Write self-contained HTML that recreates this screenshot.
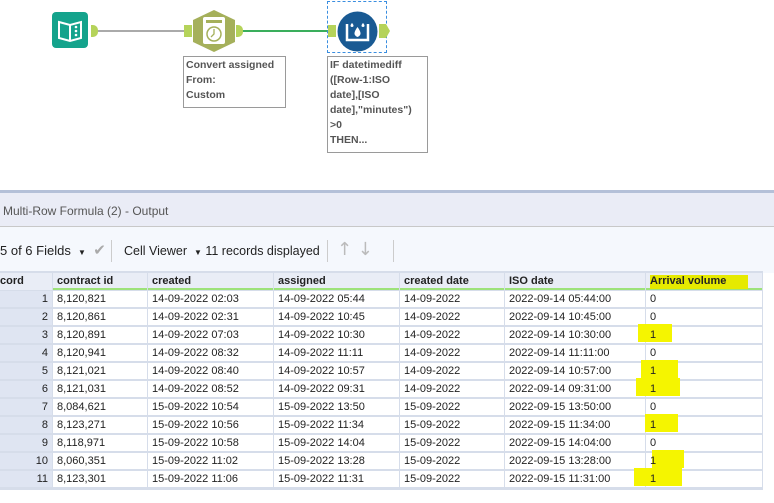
<!DOCTYPE html>
<html><head><meta charset="utf-8"><style>
*{margin:0;padding:0;box-sizing:border-box}
body{width:774px;height:503px;overflow:hidden;background:#fff;font-family:"Liberation Sans",sans-serif;position:relative}
.a{position:absolute}
.tb{position:absolute;border:1px solid #9a9a9a;background:#fff;color:#555;font-size:10.5px;font-weight:bold;line-height:15px;padding:1px 2px}
.cell{position:absolute;height:16px;background:#fff;font-size:11px;line-height:16px;color:#222;padding-left:4px;white-space:nowrap}
.tx{position:absolute;height:16px;font-size:11px;line-height:16px;color:#222;padding-left:4px;z-index:3}
.hd{position:absolute;height:17px;background:#e9edf6;font-size:11px;line-height:16px;color:#222;font-weight:bold;padding-left:4px;border-bottom:2px solid #9de27a}
.rn{position:absolute;height:16px;background:#dfe5f2;font-size:11px;line-height:16px;color:#222;text-align:right;padding-right:4px}
.hl{position:absolute;background:#f5f500;z-index:2}
</style></head><body>
<div class="a" style="left:52px;top:12px;width:36px;height:36px;background:#14a38c;border-radius:4px"></div>
<svg class="a" style="left:52px;top:12px" width="36" height="36"><path d="M7 10 L18 13 L29 10 L29 26 L18 29 L7 26Z" fill="none" stroke="#fff" stroke-width="2"/><line x1="18" y1="13" x2="18" y2="29" stroke="#fff" stroke-width="2"/><circle cx="24" cy="15" r="1.3" fill="#fff"/><circle cx="24" cy="19" r="1.3" fill="#fff"/><circle cx="24" cy="23" r="1.3" fill="#fff"/></svg>
<div class="a" style="left:91px;top:25px;width:7px;height:12px;background:#b5d35a;border-radius:0 5px 5px 0"></div>
<div class="a" style="left:98px;top:30px;width:88px;height:2px;background:#aaa"></div>
<div class="a" style="left:184px;top:25px;width:8px;height:12px;background:#b5d35a"></div>
<svg class="a" style="left:192px;top:10px" width="44" height="42"><polygon points="22,0 43,10 43,32 22,42 1,32 1,10" fill="#a5b05b"/><rect x="11" y="7" width="22" height="27" rx="2" fill="#fff"/><rect x="14" y="10" width="16" height="3" fill="#a5b05b"/><circle cx="22" cy="24" r="7" fill="none" stroke="#a5b05b" stroke-width="1.5"/><path d="M22 19 V24 L19 27" fill="none" stroke="#a5b05b" stroke-width="1.3"/></svg>
<div class="a" style="left:236px;top:25px;width:7px;height:12px;background:#b5d35a;border-radius:0 5px 5px 0"></div>
<div class="a" style="left:243px;top:30px;width:85px;height:2px;background:#3aae5c"></div>
<div class="a" style="left:327px;top:1px;width:60px;height:52px;border:1px dashed #3a8ee0"></div>
<div class="a" style="left:328px;top:25px;width:8px;height:12px;background:#b5d35a"></div>
<svg class="a" style="left:337px;top:11px" width="41" height="41"><circle cx="20.5" cy="20.5" r="20" fill="#195a93"/><path d="M10 13 V29 H31 V13" fill="none" stroke="#fff" stroke-width="2.5"/><path d="M20.5 16 C17 21 16 24 20.5 26 C25 24 24 21 20.5 16Z" fill="#fff"/><path d="M15 12 C13 14 13 16 15 16 C17 16 17 14 15 12Z" fill="#fff"/><path d="M26 12 C24 14 24 16 26 16 C28 16 28 14 26 12Z" fill="#fff"/></svg>
<svg class="a" style="left:379px;top:24px" width="12" height="14"><polygon points="0,0 7,0 11,7 7,14 0,14" fill="#b5d35a"/></svg>
<div class="tb" style="left:183px;top:56px;width:103px;height:52px">Convert assigned<br>From:<br>Custom</div>
<div class="tb" style="left:327px;top:56px;width:101px;height:97px">IF datetimediff<br>([Row-1:ISO<br>date],[ISO<br>date],"minutes")<br>&gt;0<br>THEN...</div>
<div class="a" style="left:0;top:190px;width:774px;height:3px;background:#b4c0d8"></div>
<div class="a" style="left:0;top:193px;width:774px;height:33px;background:#eaecf6;font-size:12px;color:#555;line-height:36px;padding-left:3px">Multi-Row Formula (2) - Output</div>
<div class="a" style="left:0;top:226px;width:774px;height:1px;background:#c8c8c8"></div>
<div class="a" style="left:0;top:227px;width:774px;height:46px;background:#f5f8fd"></div>
<div class="a" style="left:0;top:242px;font-size:13px;color:#222;line-height:18px;white-space:nowrap">5 of 6 Fields &nbsp;<span style="font-size:8px">▼</span>&nbsp; <span style="color:#aaa;font-size:15px">✔</span></div>
<div class="a" style="left:111px;top:240px;width:1px;height:22px;background:#ccc"></div>
<div class="a" style="left:124px;top:242px;font-size:12.5px;color:#222;line-height:18px;white-space:nowrap">Cell Viewer &nbsp;<span style="font-size:8px">▼</span>&nbsp;11 records displayed</div>
<div class="a" style="left:327px;top:240px;width:1px;height:22px;background:#ccc"></div>
<div class="a" style="left:337px;top:239px;font-size:18px;color:#bbb;line-height:22px;font-family:'DejaVu Sans',sans-serif">↑ ↓</div>
<div class="a" style="left:393px;top:240px;width:1px;height:22px;background:#ccc"></div>
<div class="a" style="left:0;top:271px;width:763px;height:219px;background:#d6ddea"></div>
<div id="t"></div>
<script>
var cols=[[0,52],[53,94],[148,125],[274,125],[400,104],[505,140],[646,116]];
var hd=["cord","contract id","created","assigned","created date","ISO date","Arrival volume"];
var rows=[["8,120,821","14-09-2022 02:03","14-09-2022 05:44","14-09-2022","2022-09-14 05:44:00","0"],
["8,120,861","14-09-2022 02:31","14-09-2022 10:45","14-09-2022","2022-09-14 10:45:00","0"],
["8,120,891","14-09-2022 07:03","14-09-2022 10:30","14-09-2022","2022-09-14 10:30:00","1"],
["8,120,941","14-09-2022 08:32","14-09-2022 11:11","14-09-2022","2022-09-14 11:11:00","0"],
["8,121,021","14-09-2022 08:40","14-09-2022 10:57","14-09-2022","2022-09-14 10:57:00","1"],
["8,121,031","14-09-2022 08:52","14-09-2022 09:31","14-09-2022","2022-09-14 09:31:00","1"],
["8,084,621","15-09-2022 10:54","15-09-2022 13:50","15-09-2022","2022-09-15 13:50:00","0"],
["8,123,271","15-09-2022 10:56","15-09-2022 11:34","15-09-2022","2022-09-15 11:34:00","1"],
["8,118,971","15-09-2022 10:58","15-09-2022 14:04","15-09-2022","2022-09-15 14:04:00","0"],
["8,060,351","15-09-2022 11:02","15-09-2022 13:28","15-09-2022","2022-09-15 13:28:00","1"],
["8,123,301","15-09-2022 11:06","15-09-2022 11:31","15-09-2022","2022-09-15 11:31:00","1"]];
var h="";
cols.forEach(function(c,i){h+='<div class="hd" style="left:'+c[0]+'px;top:273px;width:'+c[1]+'px;'+(i==0?'border-bottom-color:#e9edf6;padding-left:0':'')+'">'+(i==6?'<span style="background:#e6ea00;padding:0 22px 2px 0">'+hd[i]+'</span>':hd[i])+'</div>';});
var hls=[[3,638,672],[5,641,678],[6,636,680],[8,645,678],[10,652,684],[11,634,682]];
hls.forEach(function(x){var y=291+(x[0]-1)*18;h+='<div class="hl" style="left:'+x[1]+'px;top:'+(y-3)+'px;width:'+(x[2]-x[1])+'px;height:18px"></div>';});
rows.forEach(function(r,j){var y=291+j*18;
h+='<div class="rn" style="left:0;top:'+y+'px;width:52px">'+(j+1)+'</div>';
r.forEach(function(v,k){var c=cols[k+1];
if(k==5){h+='<div class="cell" style="left:'+c[0]+'px;top:'+y+'px;width:'+c[1]+'px"></div><div class="tx" style="left:'+c[0]+'px;top:'+y+'px">'+v+'</div>';}
else h+='<div class="cell" style="left:'+c[0]+'px;top:'+y+'px;width:'+c[1]+'px">'+v+'</div>';});
});
document.getElementById("t").innerHTML=h;
</script>
</body></html>
